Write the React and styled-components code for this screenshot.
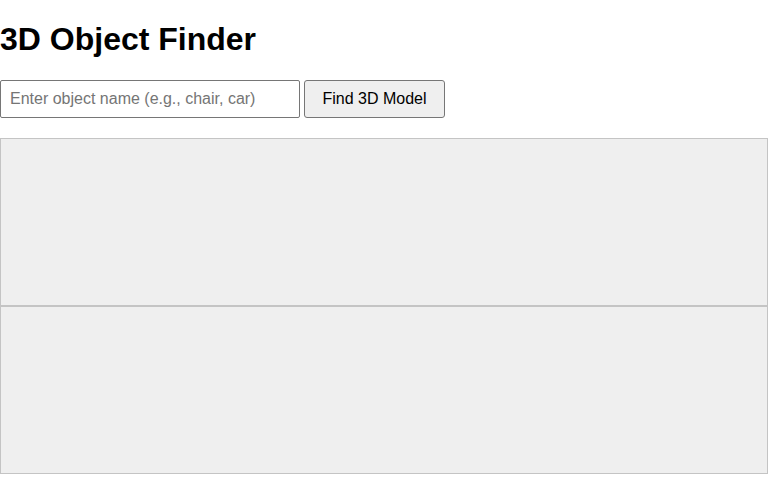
import React from 'react';
import { styled, createGlobalStyle } from 'styled-components';

const GlobalStyle = createGlobalStyle`
  body {
    margin: 0;
    font-family: "Liberation Sans", Arial, sans-serif;
    background: #fff;
    color: #000;
  }
`;

function App() {
  return (
    <Page>
      <GlobalStyle />
      <Title>3D Object Finder</Title>
      <SearchRow>
        <SearchInput type="text" placeholder="Enter object name (e.g., chair, car)" />
        <FindButton>Find 3D Model</FindButton>
      </SearchRow>
      <Viewers>
        <Viewer />
        <Viewer />
      </Viewers>
    </Page>
  );
}

const Page = styled.div`
  width: 768px;
`;

const Title = styled.h1`
  font-size: 32px;
  font-weight: bold;
  margin: 21px 0 22px 0;
  line-height: 37px;
`;

const SearchRow = styled.div`
  display: flex;
  gap: 4px;
  height: 38px;
`;

const SearchInput = styled.input`
  box-sizing: border-box;
  width: 300px;
  height: 38px;
  padding: 0 9px;
  font: 16px "Liberation Sans", Arial, sans-serif;
  border: 1px solid #767676;
  border-radius: 2px;
  outline: none;

  &::placeholder {
    color: #757575;
  }
`;

const FindButton = styled.button`
  box-sizing: border-box;
  width: 141px;
  height: 38px;
  font: 16px "Liberation Sans", Arial, sans-serif;
  color: #000;
  background: #efefef;
  border: 1px solid #767676;
  border-radius: 3px;
`;

const Viewers = styled.div`
  margin-top: 20px;
  display: flex;
  flex-direction: column;
`;

const Viewer = styled.div`
  box-sizing: border-box;
  width: 768px;
  height: 168px;
  background: #efefef;
  border: 1px solid #c4c4c4;
`;

export default App;
